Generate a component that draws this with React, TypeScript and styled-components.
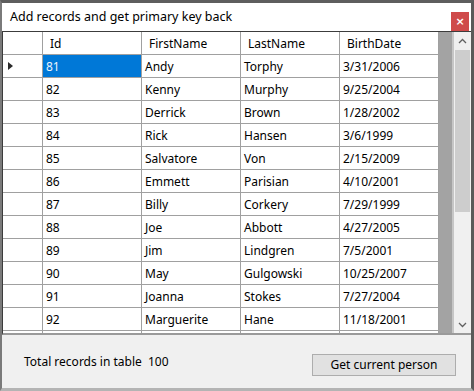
import React from 'react'
import { styled, createGlobalStyle } from 'styled-components';

const GlobalStyle = createGlobalStyle`
    html, body {
        margin: 0;
        padding: 0;
        background: #6b6b6b;
    }
`;

type Person = { id: number; first: string; last: string; born: string };

const people: Person[] = [
    { id: 81, first: 'Andy', last: 'Torphy', born: '3/31/2006' },
    { id: 82, first: 'Kenny', last: 'Murphy', born: '9/25/2004' },
    { id: 83, first: 'Derrick', last: 'Brown', born: '1/28/2002' },
    { id: 84, first: 'Rick', last: 'Hansen', born: '3/6/1999' },
    { id: 85, first: 'Salvatore', last: 'Von', born: '2/15/2009' },
    { id: 86, first: 'Emmett', last: 'Parisian', born: '4/10/2001' },
    { id: 87, first: 'Billy', last: 'Corkery', born: '7/29/1999' },
    { id: 88, first: 'Joe', last: 'Abbott', born: '4/27/2005' },
    { id: 89, first: 'Jim', last: 'Lindgren', born: '7/5/2001' },
    { id: 90, first: 'May', last: 'Gulgowski', born: '10/25/2007' },
    { id: 91, first: 'Joanna', last: 'Stokes', born: '7/27/2004' },
    { id: 92, first: 'Marguerite', last: 'Hane', born: '11/18/2001' },
];

const App = () => {
  return (
    <>
    <GlobalStyle />
    <Window>
        <TitleBar>
            <TitleText>Add records and get primary key back</TitleText>
            <CloseButton>×</CloseButton>
        </TitleBar>
        <GridBox>
            <GridArea>
                <Row>
                    <RowHeader />
                    <HeaderCell>Id</HeaderCell>
                    <HeaderCell>FirstName</HeaderCell>
                    <HeaderCell>LastName</HeaderCell>
                    <HeaderCell>BirthDate</HeaderCell>
                </Row>
                {people.map((p, i) => (
                    <Row key={p.id}>
                        <RowHeader>{i === 0 && <CurrentArrow />}</RowHeader>
                        <Cell $selected={i === 0}>{p.id}</Cell>
                        <Cell>{p.first}</Cell>
                        <Cell>{p.last}</Cell>
                        <Cell>{p.born}</Cell>
                    </Row>
                ))}
                {/* next row, scrolled mostly out of view */}
                <Row>
                    <RowHeader />
                    <Cell />
                    <Cell />
                    <Cell />
                    <Cell />
                </Row>
            </GridArea>
            <ScrollBar>
                <ScrollArrow>
                    <svg width="9" height="6" viewBox="0 0 9 6">
                        <path d="M1 5 L4.5 1.5 L8 5" fill="none" stroke="#606060" strokeWidth="1.3" />
                    </svg>
                </ScrollArrow>
                <ScrollTrack>
                    <ScrollThumb />
                </ScrollTrack>
                <ScrollArrow>
                    <svg width="9" height="6" viewBox="0 0 9 6">
                        <path d="M1 1 L4.5 4.5 L8 1" fill="none" stroke="#606060" strokeWidth="1.3" />
                    </svg>
                </ScrollArrow>
            </ScrollBar>
        </GridBox>
        <Footer>
            <FooterLabel>Total records in table</FooterLabel>
            <FooterValue>100</FooterValue>
            <Spacer />
            <PushButton>Get current person</PushButton>
        </Footer>
    </Window>
    </>
  )
};

const Window = styled.div`
    width: 474px;
    height: 391px;
    box-sizing: border-box;
    border-top: 3px solid #5e5e5e;
    border-left: 2px solid #7a7a7a;
    border-right: 3px solid #5a5a5a;
    border-bottom: 3px solid #b4b4b4;
    background-color: #f0f0f0;
    display: flex;
    flex-direction: column;
    font-family: "Noto Sans", "Open Sans", sans-serif;
    font-size: 12px;
    color: #000;
    overflow: hidden;
`;

const TitleBar = styled.div`
    height: 28px;
    background-color: #fff;
    display: flex;
    align-items: center;
    justify-content: space-between;
    padding: 0 2px 0 8px;
`;

const TitleText = styled.div`
    font-size: 12.5px;
    line-height: 16px;
`;

const CloseButton = styled.div`
    width: 18px;
    height: 19px;
    margin-top: 8px;
    background-color: #cf4a4a;
    color: #fff;
    font-family: "DejaVu Sans", sans-serif;
    font-size: 11px;
    font-weight: 700;
    display: flex;
    justify-content: center;
    align-items: center;
`;

const GridBox = styled.div`
    height: 304px;
    box-sizing: border-box;
    border-top: 1px solid #3c3c3c;
    border-left: 1px solid #3c3c3c;
    border-bottom: 2px solid #9a9a9a;
    display: flex;
`;

const GridArea = styled.div`
    flex: 1;
    background-color: #a3a3a3;
    overflow: hidden;
`;

const Row = styled.div`
    display: grid;
    grid-template-columns: 40px 99px 99px 99px 99px;
    height: 23px;
`;

const RowHeader = styled.div`
    background-color: #fff;
    border-right: 1px solid #a0a0a0;
    border-bottom: 1px solid #a0a0a0;
    display: flex;
    align-items: center;
    padding-left: 5px;
`;

const CurrentArrow = styled.div`
    width: 0;
    height: 0;
    border-top: 4px solid transparent;
    border-bottom: 4px solid transparent;
    border-left: 5px solid #2a2a2a;
`;

const HeaderCell = styled.div`
    background-color: #fff;
    border-right: 1px solid #a0a0a0;
    border-bottom: 1px solid #a0a0a0;
    padding-left: 7px;
    display: flex;
    align-items: center;
`;

const Cell = styled.div<{ $selected?: boolean }>`
    background-color: ${p => (p.$selected ? '#0078d7' : '#fff')};
    color: ${p => (p.$selected ? '#eaf3fc' : '#000')};
    border-right: 1px solid #a0a0a0;
    border-bottom: 1px solid #a0a0a0;
    padding-left: 3px;
    display: flex;
    align-items: center;
`;

const ScrollBar = styled.div`
    width: 17px;
    border-left: 2px solid #c6c6c6;
    background-color: #f0f0f0;
    display: flex;
    flex-direction: column;
`;

const ScrollArrow = styled.div`
    height: 17px;
    display: flex;
    justify-content: center;
    align-items: center;
`;

const ScrollTrack = styled.div`
    flex: 1;
    padding: 1px 1px 0 1px;
`;

const ScrollThumb = styled.div`
    height: 162px;
    background-color: #cdcdcd;
`;

const Footer = styled.div`
    flex: 1;
    display: flex;
    align-items: center;
    padding: 0 15px 0 22px;
`;

const FooterLabel = styled.div`
    width: 124px;
`;

const FooterValue = styled.div``;

const Spacer = styled.div`
    flex: 1;
`;

const PushButton = styled.div`
    width: 142px;
    height: 20px;
    margin-top: 6px;
    background-color: #e1e1e1;
    border: 1px solid #adadad;
    display: flex;
    justify-content: center;
    align-items: center;
`;

export default App;
